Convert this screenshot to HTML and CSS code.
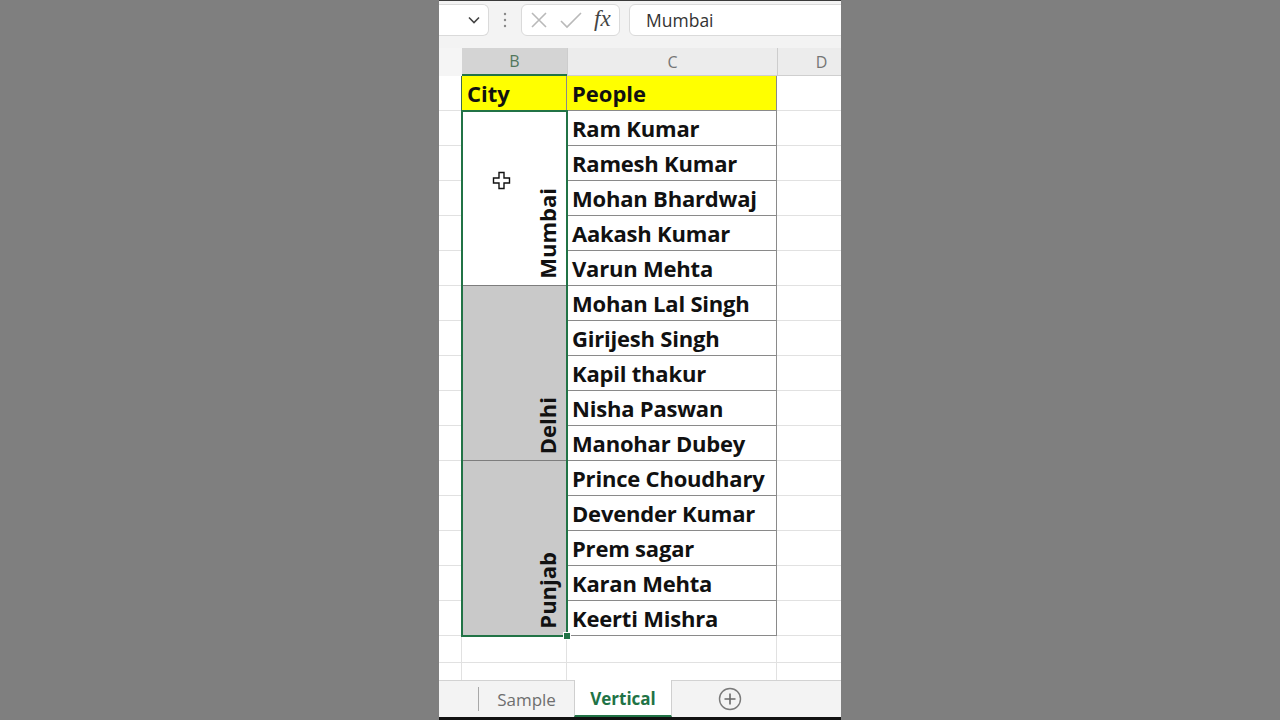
FILE: index.html
```html
<!DOCTYPE html>
<html lang="en">
<head>
<meta charset="utf-8">
<title>Vertical</title>
<link rel="stylesheet" href="styles.css">
</head>
<body>
<div class="app">
  <div class="fbar">
    <div class="namebox">
      <svg class="chev" width="12" height="8" viewBox="0 0 12 8"><path d="M1 1.5 L6 6.5 L11 1.5" fill="none" stroke="#444" stroke-width="1.6"/></svg>
    </div>
    <div class="dots">
      <svg width="4" height="16" viewBox="0 0 4 16"><circle cx="2" cy="2" r="1.2" fill="#888"/><circle cx="2" cy="8" r="1.2" fill="#888"/><circle cx="2" cy="14" r="1.2" fill="#888"/></svg>
    </div>
    <div class="iconbox">
      <svg class="ic" width="20" height="20" viewBox="0 0 20 20"><path d="M3 3 L17 17 M17 3 L3 17" stroke="#b9b9b9" stroke-width="1.6" fill="none"/></svg>
      <svg class="ic" width="24" height="20" viewBox="0 0 24 20"><path d="M2 11 L8 17 L22 3" stroke="#b9b9b9" stroke-width="1.6" fill="none"/></svg>
      <span class="fx">fx</span>
    </div>
    <div class="fbox">Mumbai</div>
  </div>
  <div class="gap"></div>
  <div class="colhead">
    <div class="ch stub"></div>
    <div class="ch chb">B</div>
    <div class="ch chc">C</div>
    <div class="ch chd">D</div>
  </div>
  <div class="sheet">
    <div class="cell stub hstub"></div>
    <div class="cell b hd city-h">City</div>
    <div class="cell c hd">People</div>
    <div class="cell d"></div>

    <div class="cell stub"></div>
    <div class="cell b city m1"><span class="vt">Mumbai</span></div>
    <div class="cell c n">Ram Kumar</div>
    <div class="cell d"></div>
    <div class="cell stub"></div>
    <div class="cell c n">Ramesh Kumar</div>
    <div class="cell d"></div>
    <div class="cell stub"></div>
    <div class="cell c n">Mohan Bhardwaj</div>
    <div class="cell d"></div>
    <div class="cell stub"></div>
    <div class="cell c n">Aakash Kumar</div>
    <div class="cell d"></div>
    <div class="cell stub"></div>
    <div class="cell c n">Varun Mehta</div>
    <div class="cell d"></div>

    <div class="cell stub"></div>
    <div class="cell b city gray m2"><span class="vt">Delhi</span></div>
    <div class="cell c n">Mohan Lal Singh</div>
    <div class="cell d"></div>
    <div class="cell stub"></div>
    <div class="cell c n">Girijesh Singh</div>
    <div class="cell d"></div>
    <div class="cell stub"></div>
    <div class="cell c n">Kapil thakur</div>
    <div class="cell d"></div>
    <div class="cell stub"></div>
    <div class="cell c n">Nisha Paswan</div>
    <div class="cell d"></div>
    <div class="cell stub"></div>
    <div class="cell c n">Manohar Dubey</div>
    <div class="cell d"></div>

    <div class="cell stub"></div>
    <div class="cell b city gray m3"><span class="vt">Punjab</span></div>
    <div class="cell c n">Prince Choudhary</div>
    <div class="cell d"></div>
    <div class="cell stub"></div>
    <div class="cell c n">Devender Kumar</div>
    <div class="cell d"></div>
    <div class="cell stub"></div>
    <div class="cell c n">Prem sagar</div>
    <div class="cell d"></div>
    <div class="cell stub"></div>
    <div class="cell c n">Karan Mehta</div>
    <div class="cell d"></div>
    <div class="cell stub"></div>
    <div class="cell c n">Keerti Mishra</div>
    <div class="cell d"></div>

    <div class="cell stub"></div>
    <div class="cell b"></div>
    <div class="cell c"></div>
    <div class="cell d"></div>
    <div class="cell stub last"></div>
    <div class="cell b last"></div>
    <div class="cell c last"></div>
    <div class="cell d last"></div>

    <div class="sel"><div class="handle"></div></div>
    <svg class="cursor" width="20" height="20" viewBox="0 0 20 20"><path d="M7 1.5 H12 V7 H17.5 V12 H12 V17.5 H7 V12 H1.5 V7 H7 Z" fill="#fff" stroke="#111" stroke-width="1.4" stroke-linejoin="miter"/></svg>
  </div>
  <div class="tabs">
    <div class="tsep"></div>
    <div class="tab">Sample</div>
    <div class="tab active">Vertical</div>
    <svg class="addtab" width="24" height="24" viewBox="0 0 24 24"><circle cx="12" cy="12" r="10.5" fill="none" stroke="#7a7a7a" stroke-width="1.4"/><path d="M12 6.5 V17.5 M6.5 12 H17.5" stroke="#6a6a6a" stroke-width="1.6"/></svg>
  </div>
</div>
</body>
</html>
```
FILE: styles.css
```css
* { box-sizing: border-box; margin: 0; padding: 0; }
html, body { height: 100%; }
body {
  background: #7f7f7f;
  display: flex;
  justify-content: center;
  overflow: hidden;
  font-family: "Open Sans", "Liberation Sans", sans-serif;
}
.app {
  width: 402px;
  height: 720px;
  background: #fff;
  display: flex;
  flex-direction: column;
  overflow: hidden;
  border-top: 1px solid #3a3a3a;
  border-bottom: 3px solid #111;
}

/* formula bar */
.fbar {
  height: 43px;
  flex: none;
  background: #f3f3f3;
  display: flex;
  align-items: flex-start;
  padding-top: 3px;
}
.namebox {
  width: 50px;
  height: 32px;
  flex: none;
  background: #fff;
  border: 1px solid #dadada;
  border-left: none;
  border-radius: 0 6px 6px 0;
  display: flex;
  align-items: center;
  justify-content: flex-end;
  padding-right: 8px;
}
.dots {
  width: 32px;
  height: 32px;
  flex: none;
  display: flex;
  align-items: center;
  justify-content: center;
}
.iconbox {
  width: 99px;
  height: 32px;
  flex: none;
  background: #fff;
  border: 1px solid #dadada;
  border-radius: 6px;
  display: flex;
  align-items: center;
  padding-left: 7px;
  gap: 10px;
}
.fx {
  font-family: "Liberation Serif", serif;
  font-style: italic;
  font-size: 23px;
  color: #444;
  margin-left: 1px;
  line-height: 1;
  padding-bottom: 3px;
}
.fbox {
  margin-left: 9px;
  width: 240px;
  flex: none;
  height: 32px;
  background: #fff;
  border: 1px solid #dadada;
  border-radius: 6px;
  padding-left: 16px;
  font-family: "Open Sans", sans-serif;
  font-size: 17.5px;
  line-height: 30px;
  color: #333;
}
.gap { height: 4px; flex: none; background: #f3f3f3; }

/* column headers */
.colhead {
  height: 28px;
  flex: none;
  display: flex;
  background: #f5f5f5;
}
.ch {
  display: flex;
  align-items: center;
  justify-content: center;
  font-family: "Open Sans", sans-serif;
  font-size: 16px;
  color: #757575;
  border-bottom: 1px solid #cfcfcf;
}
.colhead .stub { width: 23px; flex: none; border-bottom: none; }
.chb {
  width: 105px; flex: none;
  background: #d4d4d4;
  color: #52775c;
  border-bottom: 2px solid #217346;
}
.chc { width: 210px; flex: none; background: #ececec; border-left: 1px solid #cdcdcd; }
.chd { width: 88px; flex: none; background: #ececec; border-left: 1px solid #cdcdcd; }

/* sheet */
.sheet {
  position: relative;
  flex: none;
  height: 604px;
  display: grid;
  grid-template-columns: 23px 105px 210px 88px;
  grid-template-rows: 35px repeat(15, 35px) 27px 17px;
}
.cell {
  border-right: 1px solid #e1e1e1;
  border-bottom: 1px solid #e1e1e1;
}
.stub { grid-column: 1; }
.b { grid-column: 2; }
.c { grid-column: 3; }
.d { grid-column: 4; }
.last { border-bottom: none; }
.hstub { border-right: 1px solid #3d6b4b; }

.hd, .n, .vt {
  font-family: "Open Sans", "Liberation Sans", sans-serif;
  font-weight: 700;
  font-size: 22px;
  line-height: 26px;
  color: #111;
  white-space: nowrap;
}
.hd {
  background: #ffff00;
  border-right: 1px solid #8a8a8a;
  border-bottom: 1px solid #8a8a8a;
  display: flex;
  align-items: flex-end;
  padding: 0 0 4px 5px;
}
.city-h { padding-left: 5px; }
.n {
  border-right: 1px solid #8a8a8a;
  border-bottom: 1px solid #8a8a8a;
  display: flex;
  align-items: flex-end;
  padding: 0 0 4px 5px;
  letter-spacing: -0.2px;
}
.city {
  border-right: 1px solid #8a8a8a;
  border-bottom: 1px solid #7d7d7d;
  display: flex;
  justify-content: flex-end;
  align-items: flex-end;
  padding: 0 6px 6px 0;
}
.m1 { grid-row: 2 / span 5; }
.m2 { grid-row: 7 / span 5; }
.m3 { grid-row: 12 / span 5; }
.gray { background: #c9c9c9; }
.vt {
  writing-mode: vertical-rl;
  transform: rotate(180deg);
}

.sel {
  position: absolute;
  left: 22px;
  top: 34px;
  width: 107px;
  height: 527px;
  border: 2px solid #217346;
  pointer-events: none;
}
.handle {
  position: absolute;
  right: -5px;
  bottom: -5px;
  width: 8px;
  height: 8px;
  background: #217346;
  border: 1px solid #fff;
}
.cursor {
  position: absolute;
  left: 53px;
  top: 95px;
}

/* sheet tabs */
.tabs {
  height: 37px;
  flex: none;
  background: #f3f3f3;
  border-top: 1px solid #d2d2d2;
  display: flex;
  align-items: stretch;
  font-family: "Open Sans", sans-serif;
  font-size: 17px;
}
.tsep {
  width: 1px;
  margin: 6px 0 6px 39px;
  background: #a8a8a8;
  flex: none;
}
.tab {
  width: 95px;
  flex: none;
  display: flex;
  align-items: center;
  justify-content: center;
  color: #6e6e6e;
}
.tab.active {
  width: 98px;
  margin-top: -1px;
  background: #fff;
  border-left: 1px solid #cfcfcf;
  border-right: 1px solid #cfcfcf;
  border-bottom: 2px solid #217346;
  color: #217346;
  font-weight: 700;
  padding-top: 1px;
}
.addtab {
  align-self: center;
  margin-left: 46px;
  flex: none;
}
```
